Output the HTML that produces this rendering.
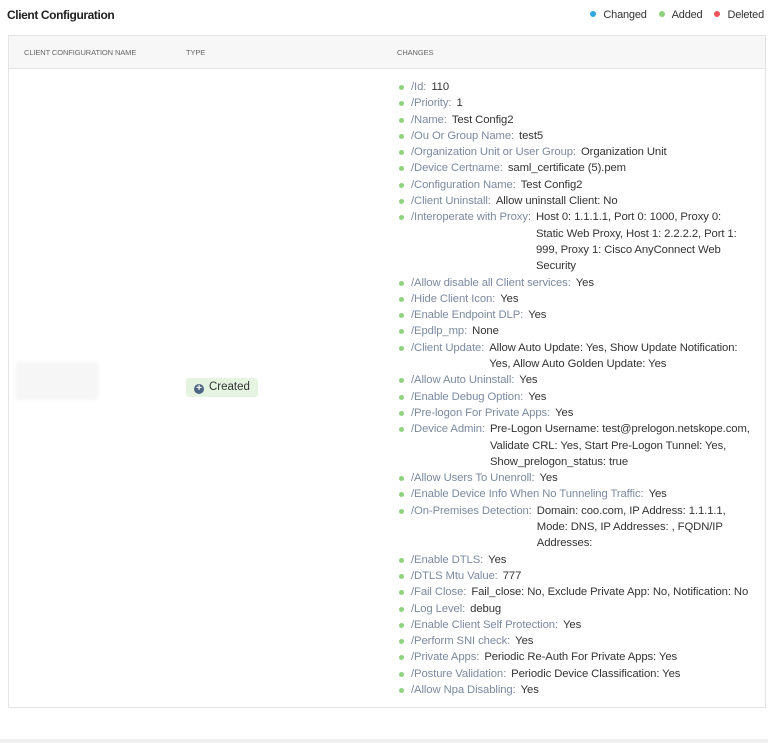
<!DOCTYPE html>
<html><head><meta charset="utf-8"><style>
*{margin:0;padding:0;box-sizing:border-box}
body{width:768px;height:743px;background:#fff;font-family:"Liberation Sans",sans-serif;position:relative;overflow:hidden;color:#333}
.title{position:absolute;left:7px;top:8px;font-size:12px;font-weight:bold;color:#222;letter-spacing:-0.4px}
.legend{position:absolute;right:4px;top:9px;font-size:11px;color:#333;letter-spacing:-0.2px;white-space:nowrap}
.legend span{display:inline-block;margin-left:12px}
.legend i{display:inline-block;width:6px;height:6px;border-radius:50%;margin-right:7px;vertical-align:1px}
.table{position:absolute;left:8px;top:35px;width:758px;height:673px;border:1px solid #e4e4e4}
.head{height:33px;background:#f7f7f7;border-bottom:1px solid #e4e4e4;position:relative;font-size:7.5px;color:#666;text-transform:uppercase;letter-spacing:-0.1px}
.head div{position:absolute;top:12px}
.blur{position:absolute;left:6px;top:326px;width:84px;height:38px;background:#f6f6f6;border-radius:4px;filter:blur(2px)}
.badge{position:absolute;left:177px;top:342px;width:72px;height:19px;background:#e5f4e1;border-radius:3px;font-size:11.5px;color:#333;line-height:19px;padding-left:8px;white-space:nowrap}
.badge b{display:inline-block;width:10px;height:10px;border-radius:50%;background:#4f6585;color:#fff;font-size:10px;line-height:10px;text-align:center;vertical-align:-1px;margin-right:5px;font-weight:bold}
.list{position:absolute;left:388px;top:43px;font-size:11.3px;letter-spacing:-0.1px}
.r{display:flex;line-height:16.3px;white-space:nowrap;position:relative;padding-left:14px}
.r:before{content:"";position:absolute;left:2px;top:6px;width:5px;height:5px;border-radius:50%;background:#8fd17f}
.k{color:#7b8aa0;margin-right:5px}
.v{color:#333}
.bottom{position:absolute;left:0;top:739px;width:768px;height:4px;background:#f0f0f0}
</style></head><body>
<div class="title">Client Configuration</div>
<div class="legend"><span><i style="background:#2fa8e0"></i>Changed</span><span><i style="background:#8fd17f"></i>Added</span><span><i style="background:#f2545b"></i>Deleted</span></div>
<div class="table">
<div class="head"><div style="left:15px">Client Configuration Name</div><div style="left:177px">Type</div><div style="left:388px">Changes</div></div>
<div class="blur"></div>
<div class="badge"><b>+</b>Created</div>
<div class="list">
<div class="r"><span class="k">/Id:</span><span class="v">110</span></div>
<div class="r"><span class="k">/Priority:</span><span class="v">1</span></div>
<div class="r"><span class="k">/Name:</span><span class="v">Test Config2</span></div>
<div class="r"><span class="k">/Ou Or Group Name:</span><span class="v">test5</span></div>
<div class="r"><span class="k">/Organization Unit or User Group:</span><span class="v">Organization Unit</span></div>
<div class="r"><span class="k">/Device Certname:</span><span class="v">saml_certificate (5).pem</span></div>
<div class="r"><span class="k">/Configuration Name:</span><span class="v">Test Config2</span></div>
<div class="r"><span class="k">/Client Uninstall:</span><span class="v">Allow uninstall Client: No</span></div>
<div class="r"><span class="k">/Interoperate with Proxy:</span><span class="v">Host 0: 1.1.1.1, Port 0: 1000, Proxy 0:<br>Static Web Proxy, Host 1: 2.2.2.2, Port 1:<br>999, Proxy 1: Cisco AnyConnect Web<br>Security</span></div>
<div class="r"><span class="k">/Allow disable all Client services:</span><span class="v">Yes</span></div>
<div class="r"><span class="k">/Hide Client Icon:</span><span class="v">Yes</span></div>
<div class="r"><span class="k">/Enable Endpoint DLP:</span><span class="v">Yes</span></div>
<div class="r"><span class="k">/Epdlp_mp:</span><span class="v">None</span></div>
<div class="r"><span class="k">/Client Update:</span><span class="v">Allow Auto Update: Yes, Show Update Notification:<br>Yes, Allow Auto Golden Update: Yes</span></div>
<div class="r"><span class="k">/Allow Auto Uninstall:</span><span class="v">Yes</span></div>
<div class="r"><span class="k">/Enable Debug Option:</span><span class="v">Yes</span></div>
<div class="r"><span class="k">/Pre-logon For Private Apps:</span><span class="v">Yes</span></div>
<div class="r"><span class="k">/Device Admin:</span><span class="v">Pre-Logon Username: test@prelogon.netskope.com,<br>Validate CRL: Yes, Start Pre-Logon Tunnel: Yes,<br>Show_prelogon_status: true</span></div>
<div class="r"><span class="k">/Allow Users To Unenroll:</span><span class="v">Yes</span></div>
<div class="r"><span class="k">/Enable Device Info When No Tunneling Traffic:</span><span class="v">Yes</span></div>
<div class="r"><span class="k">/On-Premises Detection:</span><span class="v">Domain: coo.com, IP Address: 1.1.1.1,<br>Mode: DNS, IP Addresses: , FQDN/IP<br>Addresses:</span></div>
<div class="r"><span class="k">/Enable DTLS:</span><span class="v">Yes</span></div>
<div class="r"><span class="k">/DTLS Mtu Value:</span><span class="v">777</span></div>
<div class="r"><span class="k">/Fail Close:</span><span class="v">Fail_close: No, Exclude Private App: No, Notification: No</span></div>
<div class="r"><span class="k">/Log Level:</span><span class="v">debug</span></div>
<div class="r"><span class="k">/Enable Client Self Protection:</span><span class="v">Yes</span></div>
<div class="r"><span class="k">/Perform SNI check:</span><span class="v">Yes</span></div>
<div class="r"><span class="k">/Private Apps:</span><span class="v">Periodic Re-Auth For Private Apps: Yes</span></div>
<div class="r"><span class="k">/Posture Validation:</span><span class="v">Periodic Device Classification: Yes</span></div>
<div class="r"><span class="k">/Allow Npa Disabling:</span><span class="v">Yes</span></div>
</div>
</div>
<div class="bottom"></div>
</body></html>
